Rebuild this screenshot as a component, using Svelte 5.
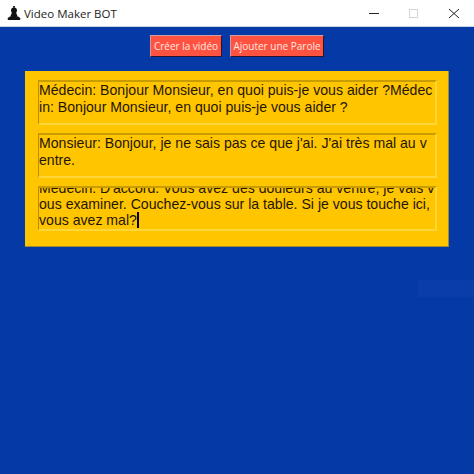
<script>
  const boxes = [
    { lines: ['Médecin: Bonjour Monsieur, en quoi puis-je vous aider ?Médec', 'in: Bonjour Monsieur, en quoi puis-je vous aider ?'] },
    { lines: ['Monsieur: Bonjour, je ne sais pas ce que j\'ai. J\'ai très mal au v', 'entre.'] },
    {
      lines: [
        'Médecin: D\'accord. Vous avez des douleurs au ventre, je vais v',
        'ous examiner. Couchez-vous sur la table. Si je vous touche ici,',
        'vous avez mal?'
      ],
      active: true
    }
  ];
</script>

<div class="window">
  <header class="titlebar">
    <svg class="logo" width="14" height="14" viewBox="0 0 16 16">
      <circle cx="8" cy="5" r="3.4" fill="#111" />
      <rect x="7" y="0" width="2" height="2" fill="#111" />
      <path d="M5.500 8h5l1.500 3.500H4z" fill="#111" />
      <path d="M1 14c1-2 3-3 7-3s6 1 7 3v2H1z" fill="#111" />
    </svg>
    <span class="title">Video Maker BOT</span>
    <div class="controls">
      <svg width="40" height="27" viewBox="0 0 40 27"><path d="M15 13.500h10" stroke="#222" fill="none" /></svg>
      <svg width="40" height="27" viewBox="0 0 40 27"><rect x="15.500" y="9.500" width="8" height="8" stroke="#d4d4d4" fill="none" /></svg>
      <svg width="40" height="27" viewBox="0 0 40 27"><path d="M15 9l10 9M25 9l-10 9" stroke="#222" fill="none" /></svg>
    </div>
  </header>

  <main class="content">
    <div class="actions">
      <button class="first">Créer la vidéo</button>
      <button class="second">Ajouter une Parole</button>
    </div>

    <section class="panel">
      {#each boxes as box}
        <div class="box">
          {#each box.lines as line, i}
            <div class="line">{line}{#if box.active && i === box.lines.length - 1}<span class="caret"></span>{/if}</div>
          {/each}
        </div>
      {/each}
    </section>

    <div class="ghost"></div>
  </main>
</div>

<style>
  :global(body) {
    margin: 0;
    background: #0539a6;
  }

  .window {
    width: 474px;
    height: 474px;
    display: flex;
    flex-direction: column;
    overflow: hidden;
    font-family: "Liberation Sans", Arial, sans-serif;
  }

  .titlebar {
    height: 27px;
    background: #fff;
    display: flex;
    align-items: center;
    padding-left: 7px;
    flex: none;
    border-bottom: 1px solid #c8d4e4;
    box-sizing: border-box;
  }

  .logo {
    flex: none;
  }

  .title {
    margin-left: 3px;
    font-family: "Open Sans", sans-serif;
    font-size: 11.500px;
    color: #222;
  }

  .controls {
    margin-left: auto;
    display: flex;
  }

  .controls svg {
    display: block;
  }

  .content {
    position: relative;
    flex: 1;
    background: #0539a6;
    padding: 8px 25px 0;
  }

  .actions {
    display: flex;
    height: 22px;
    padding-left: 125px;
    gap: 8px;
  }

  button {
    height: 22px;
    padding: 0;
    background: #ff5240;
    color: #ffe9e0;
    font-family: "Open Sans", sans-serif;
    font-size: 10px;
    border: 1px solid;
    border-color: #c9a0a8 #2a1530 #2a1530 #c9a0a8;
    box-sizing: border-box;
  }

  .first {
    width: 72px;
  }

  .second {
    width: 94px;
  }

  .panel {
    margin-top: 14px;
    width: 424px;
    height: 176px;
    box-sizing: border-box;
    background: #ffc600;
    border-bottom: 1px solid #a08a30;
    border-right: 1px solid #a08a30;
    padding: 9px 12px 0 13px;
    display: flex;
    flex-direction: column;
    gap: 8px;
  }

  .box {
    width: 399px;
    height: 45px;
    box-sizing: border-box;
    border-style: solid;
    border-width: 2px 2px 2px 1px;
    border-color: #c99c00 #ffd63a #ffd63a #b98f00;
    overflow: hidden;
    color: #1f1500;
    font-size: 14.100px;
    line-height: 16.500px;
  }

  .box:last-child {
    display: flex;
    flex-direction: column;
    justify-content: flex-end;
    padding-bottom: 1.500px;
    line-height: 16px;
  }

  .line {
    white-space: pre;
    flex: none;
  }

  .caret {
    display: inline-block;
    width: 2px;
    height: 16px;
    background: #000;
    vertical-align: top;
  }

  .ghost {
    position: absolute;
    left: 418px;
    top: 253px;
    width: 56px;
    height: 17px;
    background: #0a3da9;
  }
</style>
